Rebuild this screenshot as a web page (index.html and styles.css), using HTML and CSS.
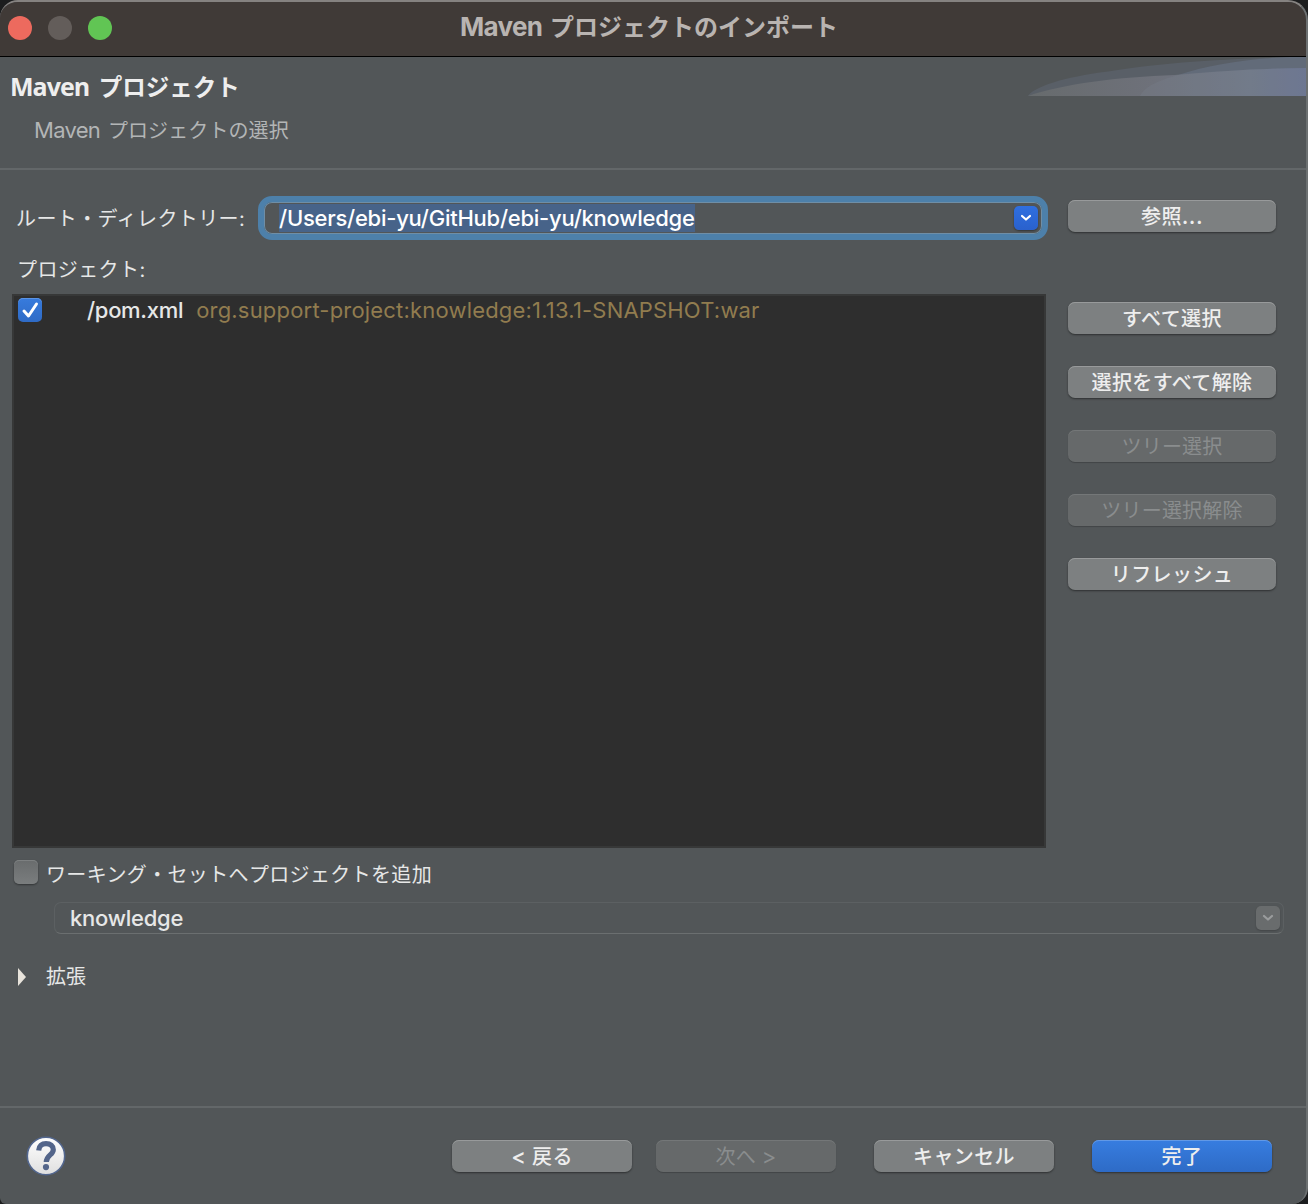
FILE: index.html
```
<!DOCTYPE html>
<html lang="ja">
<head>
    <meta charset="UTF-8">
    <meta name="viewport" content="width=device-width, initial-scale=1.0">
    <title>Maven プロジェクトのインポート</title>
    <link rel="stylesheet" href="styles.css">
</head>
<body>
    <div class="window">
        <header class="titlebar">
            <div class="lights">
                <span class="light close"></span>
                <span class="light minimize"></span>
                <span class="light zoom"></span>
            </div>
            <h1 class="window-title"><span class="maven">Maven</span> プロジェクトのインポート</h1>
        </header>

        <section class="banner">
            <div class="banner-text">
                <h2><span class="maven">Maven</span> プロジェクト</h2>
                <p><span class="maven">Maven</span> プロジェクトの選択</p>
            </div>
            <svg class="swoosh" width="278" height="39" viewBox="0 0 278 39">
                <defs>
                    <linearGradient id="fade" x1="0" x2="278" y1="0" y2="0" gradientUnits="userSpaceOnUse">
                        <stop offset="0" stop-color="#676b6d"/>
                        <stop offset="0.45" stop-color="#6e717a"/>
                        <stop offset="0.8" stop-color="#6f7888"/>
                        <stop offset="1" stop-color="#697393"/>
                    </linearGradient>
                </defs>
                <path d="M0 39C6 30 35 20 80 14.5C130 6 200 1 275 0H278V39Z" fill="#595f67"/>
                <path d="M112 39C116 29 135 22 150 18C180 8 220 1.5 262 0H278V39Z" fill="#626b79"/>
                <path d="M0 39C35 27 90 20 147 18C200 13 240 11.5 278 11V39Z" fill="url(#fade)"/>
                <path d="M112 39C116 29 135 22 150 18C200 13 240 11.5 278 11V39Z" fill="#7c8290" opacity="0.25"/>
            </svg>
        </section>

        <main>
            <div class="root-row">
                <label class="root-label">ルート・ディレクトリー:</label>
                <div class="combo focused">
                    <span class="combo-value selected">/Users/ebi-yu/GitHub/ebi-yu/knowledge</span>
                    <span class="combo-arrow">
                        <svg width="12" height="8" viewBox="0 0 12 8"><path d="M2 2L6 5.5L10 2"/></svg>
                    </span>
                </div>
                <button class="btn">参照<span class="latin">...</span></button>
            </div>

            <label class="list-label">プロジェクト:</label>

            <div class="project-row">
                <div class="project-list">
                    <div class="project">
                        <span class="checkbox checked">
                            <svg width="24" height="24" viewBox="0 0 24 24"><path d="M6 13L10.5 18L18.5 6"/></svg>
                        </span>
                        <span class="project-file">/pom.xml</span>
                        <span class="project-id">org.support-project:knowledge:1.13.1-SNAPSHOT:war</span>
                    </div>
                </div>
                <div class="side-buttons">
                    <button class="btn">すべて選択</button>
                    <button class="btn">選択をすべて解除</button>
                    <button class="btn" disabled>ツリー選択</button>
                    <button class="btn" disabled>ツリー選択解除</button>
                    <button class="btn">リフレッシュ</button>
                </div>
            </div>

            <div class="working-set">
                <span class="checkbox"></span>
                <label>ワーキング・セットへプロジェクトを追加</label>
            </div>
            <div class="combo inactive">
                <span class="combo-value">knowledge</span>
                <span class="combo-arrow">
                    <svg width="12" height="8" viewBox="0 0 12 8"><path d="M2 2L6 5.5L10 2"/></svg>
                </span>
            </div>

            <div class="advanced">
                <svg width="8" height="18" viewBox="0 0 8 18"><path d="M0 0L8 9L0 18Z"/></svg>
                <span>拡張</span>
            </div>
        </main>

        <footer>
            <svg class="help" width="40" height="40" viewBox="0 0 40 40">
                <defs>
                    <linearGradient id="disc" x1="0" x2="0" y1="0" y2="1">
                        <stop offset="0" stop-color="#ffffff"/>
                        <stop offset="1" stop-color="#dfdfdf"/>
                    </linearGradient>
                </defs>
                <circle cx="20" cy="20" r="18.7" fill="url(#disc)" stroke="#53678f" stroke-width="1.6"/>
                <path d="M12.7 14.5C13 9.8 16 7.6 20 7.6C24.5 7.6 27.3 10 27.3 13.7C27.3 19 20.3 19 20.3 26" fill="none" stroke="#53658a" stroke-width="5.2"/>
                <circle cx="20" cy="31.1" r="3.1" fill="#53658a"/>
            </svg>
            <button class="btn back"><span class="latin">&lt;</span> 戻る</button>
            <button class="btn next" disabled>次へ <span class="latin">&gt;</span></button>
            <button class="btn cancel">キャンセル</button>
            <button class="btn primary">完了</button>
        </footer>
    </div>
</body>
</html>
```

FILE: styles.css
```
* {
    box-sizing: border-box;
}
body {
    background-color: #1c1d1e;
    color: #e6e7e7;
    font-family: Inter, "Noto Sans CJK JP", sans-serif;
    font-size: 20px;
    margin: 0;
    overflow: hidden;
}
h1, h2, p {
    margin: 0;
}
svg {
    display: block;
}
.window {
    width: 1308px;
    height: 1204px;
    display: flex;
    flex-direction: column;
    background-color: #525658;
    border-top: 2px solid #858280;
    border-right: 2px solid #6c7071;
    border-radius: 18px 20px 16px 6px;
    overflow: hidden;
}

/* Title bar */
.titlebar {
    height: 55px;
    flex-shrink: 0;
    display: grid;
    grid-template-columns: 1fr auto 1fr;
    align-items: center;
    padding: 0 8px 4px;
    background-color: #403a37;
    border-bottom: 1px solid #000;
}
.lights {
    display: flex;
    gap: 16px;
    padding-top: 2px;
}
.light {
    width: 24px;
    height: 24px;
    border-radius: 50%;
}
.close {
    background-color: #ed6a5e;
}
.minimize {
    background-color: #635d5a;
}
.zoom {
    background-color: #61c554;
}
.window-title {
    font-size: 24px;
    line-height: 36px;
    font-weight: 700;
    color: #b9b4b1;
    position: relative;
    left: -4px;
}
.window-title .maven {
    font-size: 26px;
    letter-spacing: -0.7px;
    margin-right: 2px;
}

/* Wizard banner */
.banner {
    height: 113px;
    flex-shrink: 0;
    display: flex;
    justify-content: space-between;
    border-bottom: 2px solid #636769;
}
.banner-text {
    padding: 11px 0 0 10px;
}
.banner h2 {
    font-size: 23.5px;
    line-height: 36px;
    color: #eeeeee;
}
.banner h2 .maven {
    font-family: "Open Sans", sans-serif;
    font-size: 25px;
    letter-spacing: -1px;
    margin-right: 4px;
}
.banner p {
    padding: 7px 0 0 24px;
    line-height: 34px;
    color: #b3b5b6;
    letter-spacing: 0.1px;
}
.banner p .maven {
    font-size: 22px;
    letter-spacing: -0.7px;
    margin-right: 2px;
}

/* Form */
main {
    flex: 1;
    padding: 26px 0 0 12px;
}
.root-row {
    display: flex;
    align-items: flex-start;
    height: 44px;
}
.root-label {
    width: 246px;
    padding: 1px 0 0 4px;
    line-height: 44px;
    letter-spacing: 0.4px;
}
.combo {
    display: flex;
    align-items: center;
    justify-content: space-between;
}
.combo-value {
    font-size: 22px;
    font-weight: 500;
    letter-spacing: -0.25px;
}
.focused {
    width: 790px;
    height: 44px;
    margin-right: 20px;
    padding: 0 4px 0 15px;
    border: 6px solid #4d80aa;
    border-radius: 14px;
    box-shadow: inset 0 0 0 1px #6f8ea6;
}
.selected {
    background-color: #476389;
    color: #fff;
    line-height: 28px;
}
.combo-arrow {
    width: 24px;
    height: 24px;
    display: flex;
    align-items: center;
    justify-content: center;
    border-radius: 5px;
    background: linear-gradient(#2f6fe0, #2a61cd);
    box-shadow: 0 1px 2px rgba(0, 0, 0, 0.4);
}
.combo-arrow path {
    fill: none;
    stroke: #fff;
    stroke-width: 2.2;
    stroke-linecap: round;
    stroke-linejoin: round;
}
.btn {
    width: 208px;
    height: 32px;
    padding: 2px 0 0;
    border: none;
    border-radius: 7px;
    background-color: #7d8081;
    box-shadow: inset 0 1px 0 #989a9b, 0 1px 2px rgba(0, 0, 0, 0.45);
    color: #eeeeee;
    font-family: inherit;
    font-size: 20px;
    font-weight: 500;
    letter-spacing: 0.4px;
    line-height: 30px;
    white-space: nowrap;
}
.btn:disabled {
    background-color: #66696a;
    box-shadow: inset 0 1px 0 #747778, 0 1px 1px rgba(0, 0, 0, 0.2);
    color: #8a8d8e;
    font-weight: 400;
    letter-spacing: 0.2px;
}
.latin {
    font-size: 22px;
    line-height: 1;
}
.root-row .btn {
    margin-top: 4px;
}
.list-label {
    display: block;
    margin: 15px 0 9px;
    padding: 1px 0 0 5px;
    line-height: 29px;
    letter-spacing: 0.4px;
}
.project-row {
    display: flex;
    gap: 22px;
}
.project-list {
    width: 1034px;
    height: 554px;
    background-color: #2e2e2e;
    border: 2px solid #373838;
}
.project {
    display: flex;
    align-items: center;
    height: 28px;
    padding-left: 4px;
    font-size: 22px;
}
.checkbox {
    width: 24px;
    height: 24px;
    border-radius: 5px;
    background: linear-gradient(#696c6d, #7a7d7e);
    box-shadow: inset 0 1px 0 #7d8081, 0 1px 2px rgba(0, 0, 0, 0.4);
}
.checked {
    background: linear-gradient(#377bdd, #2f6bc6);
    box-shadow: inset 0 1px 0 #5c94e4;
}
.checked path {
    fill: none;
    stroke: #fff;
    stroke-width: 3;
    stroke-linecap: round;
    stroke-linejoin: round;
}
.project-file {
    margin-left: 45px;
    font-weight: 500;
    letter-spacing: -0.3px;
}
.project-id {
    margin-left: 13px;
    color: #917c4f;
    letter-spacing: 0.19px;
}
.side-buttons {
    display: flex;
    flex-direction: column;
    gap: 32px;
    padding-top: 8px;
}
.working-set {
    display: flex;
    align-items: center;
    gap: 8px;
    margin-top: 12px;
    padding-left: 2px;
    height: 24px;
}
.working-set label {
    padding-top: 2px;
    letter-spacing: 0.35px;
}
.inactive {
    width: 1230px;
    height: 32px;
    margin: 18px 0 0 42px;
    padding: 0 3px 0 15px;
    border: 1px solid #5c6062;
    border-bottom-color: #6b6f70;
    border-radius: 7px;
}
.inactive .combo-arrow {
    background: #696c6d;
    box-shadow: 0 1px 2px rgba(0, 0, 0, 0.2);
}
.inactive .combo-arrow path {
    stroke: #9a9c9d;
}
.advanced {
    display: flex;
    align-items: center;
    gap: 20px;
    height: 30px;
    margin-top: 28px;
    padding-left: 6px;
}
.advanced span {
    padding-bottom: 3px;
}
.advanced path {
    fill: #e8e4dc;
}

/* Wizard buttons */
footer {
    height: 98px;
    flex-shrink: 0;
    display: flex;
    align-items: center;
    padding: 0 34px 0 26px;
    border-top: 2px solid #636769;
}
footer .btn {
    width: 180px;
}
.back {
    margin-left: auto;
}
.next {
    margin-left: 24px;
}
.cancel, .primary {
    margin-left: 38px;
}
footer .primary {
    background: linear-gradient(#377de0, #2e6bc6);
    box-shadow: inset 0 1px 0 #6299e6, 0 1px 2px rgba(0, 0, 0, 0.45);
}
```
